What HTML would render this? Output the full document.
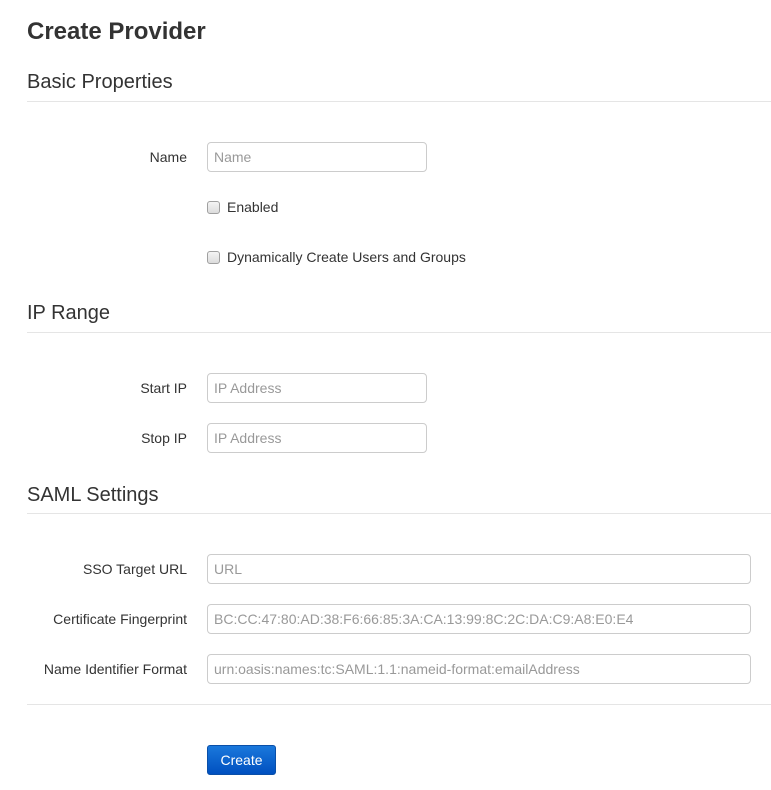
<!DOCTYPE html>
<html><head><meta charset="utf-8"><style>
*{box-sizing:border-box;margin:0;padding:0}
body{width:771px;height:790px;background:#fff;font-family:"Liberation Sans",Arial,sans-serif;color:#333;position:relative;overflow:hidden}
h1{position:absolute;left:27px;top:18px;font-size:24px;font-weight:bold;color:#333}
h2{position:absolute;left:27px;font-size:20px;font-weight:normal;color:#333}
.hr{position:absolute;left:27px;right:0;height:1px;background:#e5e5e5}
.lbl{position:absolute;right:584px;font-size:14px;text-align:right;white-space:nowrap}
.in{position:absolute;left:207px;height:30px;border:1px solid #ccc;border-radius:4px;font-size:14px;color:#999;padding:6px 6px;line-height:16px;white-space:nowrap}
.cb{position:absolute;left:207px;width:13px;height:13px;border:1px solid #a0a0a0;border-radius:3px;background:linear-gradient(#f4f4f4,#dcdcdc)}
.ct{position:absolute;left:227px;font-size:14px}
.btn{position:absolute;left:207px;top:745px;width:69px;height:30px;border:1px solid #0a4fa8;border-radius:3px;background:linear-gradient(#1a78dc,#0050c0);color:#fff;font-size:14px;text-align:center;line-height:28px}
</style></head><body>
<h1>Create Provider</h1>
<h2 style="top:71px">Basic Properties</h2>
<div class="hr" style="top:101px"></div>
<div class="lbl" style="top:149px">Name</div>
<div class="in" style="top:142px;width:220px">Name</div>
<div class="cb" style="top:201px"></div><div class="ct" style="top:199px">Enabled</div>
<div class="cb" style="top:251px"></div><div class="ct" style="top:249px">Dynamically Create Users and Groups</div>

<h2 style="top:302px">IP Range</h2>
<div class="hr" style="top:332px"></div>
<div class="lbl" style="top:380px">Start IP</div>
<div class="in" style="top:373px;width:220px">IP Address</div>
<div class="lbl" style="top:430px">Stop IP</div>
<div class="in" style="top:423px;width:220px">IP Address</div>

<h2 style="top:484px">SAML Settings</h2>
<div class="hr" style="top:513px"></div>
<div class="lbl" style="top:561px">SSO Target URL</div>
<div class="in" style="top:554px;width:544px">URL</div>
<div class="lbl" style="top:611px">Certificate Fingerprint</div>
<div class="in" style="top:604px;width:544px">BC:CC:47:80:AD:38:F6:66:85:3A:CA:13:99:8C:2C:DA:C9:A8:E0:E4</div>
<div class="lbl" style="top:661px">Name Identifier Format</div>
<div class="in" style="top:654px;width:544px">urn:oasis:names:tc:SAML:1.1:nameid-format:emailAddress</div>
<div class="hr" style="top:704px"></div>
<div class="btn">Create</div>
</body></html>
